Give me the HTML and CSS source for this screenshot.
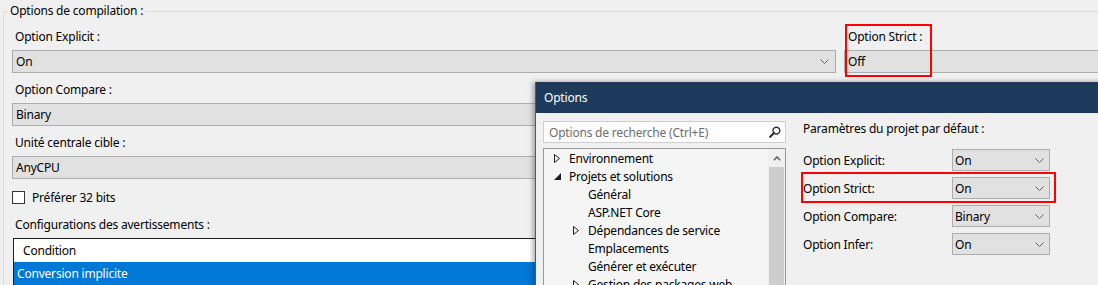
FILE: index.html
```html
<!DOCTYPE html>
<html lang="fr">
<head>
<meta charset="utf-8">
<title>Options de compilation</title>
<link rel="stylesheet" href="styles.css">
</head>
<body>
<div class="page">
  <section class="group">
    <div class="group-head">
      <span class="group-corner"></span>
      <span class="group-title">Options de compilation :</span>
      <span class="group-rule"></span>
    </div>
    <div class="group-body">
      <div class="pair">
        <div class="field field-main">
          <div class="label">Option Explicit :</div>
          <div class="combo"><span>On</span><svg class="chev" width="9" height="5" viewBox="0 0 9 5"><polyline points="0.5,0.5 4.5,4.5 8.5,0.5"/></svg></div>
        </div>
        <div class="field field-side">
          <div class="label label-side">Option Strict :</div>
          <div class="combo"><span>Off</span></div>
        </div>
      </div>
      <div class="field field-main">
        <div class="label">Option Compare :</div>
        <div class="combo"><span>Binary</span></div>
      </div>
      <div class="field field-main">
        <div class="label">Unité centrale cible :</div>
        <div class="combo"><span>AnyCPU</span></div>
      </div>
      <div class="check"><span class="box"></span><span>Préférer 32 bits</span></div>
      <div class="field field-main field-list">
        <div class="label">Configurations des avertissements :</div>
        <div class="list">
          <div class="list-row">Condition</div>
          <div class="list-row selected">Conversion implicite</div>
        </div>
      </div>
    </div>
  </section>
  <div class="mark mark-top"></div>

  <div class="dialog">
    <div class="dialog-title">Options</div>
    <div class="dialog-body">
      <div class="nav">
        <div class="search">
          <span class="placeholder">Options de recherche (Ctrl+E)</span>
          <svg class="magnifier" width="12" height="12" viewBox="0 0 12 12"><circle cx="7.4" cy="4.6" r="3.4"/><line x1="5" y1="7" x2="1.2" y2="10.8"/></svg>
        </div>
        <div class="tree">
          <div class="tree-items">
            <div class="tree-row lvl0"><span class="exp"><svg width="6" height="9" viewBox="0 0 6 9"><polygon class="tri-open" points="0.5,0.5 5.5,4.5 0.5,8.5"/></svg></span>Environnement</div>
            <div class="tree-row lvl0"><span class="exp"><svg width="7" height="7" viewBox="0 0 7 7"><polygon class="tri-full" points="7,0 7,7 0,7"/></svg></span>Projets et solutions</div>
            <div class="tree-row lvl1"><span class="exp"></span>Général</div>
            <div class="tree-row lvl1"><span class="exp"></span>ASP.NET Core</div>
            <div class="tree-row lvl1"><span class="exp"><svg width="6" height="9" viewBox="0 0 6 9"><polygon class="tri-open" points="0.5,0.5 5.5,4.5 0.5,8.5"/></svg></span>Dépendances de service</div>
            <div class="tree-row lvl1"><span class="exp"></span>Emplacements</div>
            <div class="tree-row lvl1"><span class="exp"></span>Générer et exécuter</div>
            <div class="tree-row lvl1"><span class="exp"><svg width="6" height="9" viewBox="0 0 6 9"><polygon class="tri-open" points="0.5,0.5 5.5,4.5 0.5,8.5"/></svg></span>Gestion des packages web</div>
          </div>
          <div class="scrollbar">
            <div class="sb-up"><svg width="8" height="5" viewBox="0 0 8 5"><polyline points="0.8,4.2 4,1 7.2,4.2"/></svg></div>
            <div class="sb-thumb"></div>
          </div>
        </div>
      </div>
      <div class="params">
        <div class="params-title">Paramètres du projet par défaut :</div>
        <div class="params-rows">
          <div class="param"><span class="param-label">Option Explicit:</span><div class="combo combo-sm"><span>On</span><svg class="chev" width="9" height="5" viewBox="0 0 9 5"><polyline points="0.5,0.5 4.5,4.5 8.5,0.5"/></svg></div></div>
          <div class="param"><span class="param-label">Option Strict:</span><div class="combo combo-sm"><span>On</span><svg class="chev" width="9" height="5" viewBox="0 0 9 5"><polyline points="0.5,0.5 4.5,4.5 8.5,0.5"/></svg></div></div>
          <div class="param"><span class="param-label">Option Compare:</span><div class="combo combo-sm"><span>Binary</span><svg class="chev" width="9" height="5" viewBox="0 0 9 5"><polyline points="0.5,0.5 4.5,4.5 8.5,0.5"/></svg></div></div>
          <div class="param"><span class="param-label">Option Infer:</span><div class="combo combo-sm"><span>On</span><svg class="chev" width="9" height="5" viewBox="0 0 9 5"><polyline points="0.5,0.5 4.5,4.5 8.5,0.5"/></svg></div></div>
        </div>
      </div>
    </div>
    <div class="mark mark-dialog"></div>
  </div>
</div>
</body>
</html>
```

FILE: styles.css
```css
html, body {
  margin: 0;
  padding: 0;
  overflow: hidden;
}
body {
  background: #f0f0f0;
  font-family: "Noto Sans", "Open Sans", sans-serif;
  font-size: 12px;
  letter-spacing: -0.2px;
  color: #000;
}
.page {
  position: relative;
  width: 1098px;
  height: 285px;
  overflow: hidden;
  padding-top: 2px;
  box-sizing: border-box;
}

/* group box */
.group { margin-left: 3px; }
.group-head { display: flex; height: 18px; }
.group-corner {
  width: 4px;
  margin-top: 9px;
  border-top: 1px solid #dcdcdc;
  border-left: 1px solid #dcdcdc;
}
.group-title { padding: 0 2px; line-height: 18px; white-space: nowrap; }
.group-rule { flex: 1; margin-top: 9px; border-top: 1px solid #dcdcdc; }
.group-body { border-left: 1px solid #dcdcdc; padding-left: 8px; }

.pair { display: flex; gap: 8px; width: 1200px; }
.field { display: flex; flex-direction: column; gap: 4px; padding-top: 8px; }
.field-main { width: 824px; flex: none; }
.field-side { width: 300px; flex: none; }
.label { height: 18px; line-height: 18px; padding-left: 3px; white-space: nowrap; }
.label-side { padding-left: 4px; }

.combo {
  height: 23px;
  box-sizing: border-box;
  border: 1px solid #adadad;
  background: #e1e1e1;
  display: flex;
  align-items: center;
  justify-content: space-between;
  padding: 0 6px 0 3px;
  white-space: nowrap;
}
.chev polyline { fill: none; stroke: #606060; stroke-width: 1; }

.check {
  display: flex;
  align-items: center;
  gap: 7px;
  height: 18px;
  margin-top: 9px;
}
.box {
  width: 13px;
  height: 13px;
  box-sizing: border-box;
  border: 1px solid #333;
  background: #fff;
}
.field-list { padding-top: 10px; }
.list {
  margin-left: 1px;
  border: 1px solid #1e1e1e;
  background: #fff;
}
.list-row { height: 23px; line-height: 23px; padding-left: 9px; }
.list-row.selected { background: #0078d7; color: #fff; padding-left: 3px; }

/* annotation boxes */
.mark {
  position: absolute;
  box-sizing: border-box;
  border: 2px solid #f00;
}
.mark-top { left: 845px; top: 24px; width: 87px; height: 53px; }
.mark-dialog { left: 265px; top: 90px; width: 255px; height: 31px; }

/* dialog */
.dialog {
  position: absolute;
  left: 535px;
  top: 82px;
  width: 620px;
  height: 260px;
  background: #f0f0f0;
  border-left: 1px solid #505a66;
  box-shadow: -2px 0 5px rgba(0, 0, 0, 0.35);
}
.dialog-title {
  height: 31px;
  line-height: 31px;
  background: #1e3a5c;
  color: #fff;
  padding-left: 8px;
}
.dialog-body { display: flex; padding: 8px 0 0 7px; }
.nav { width: 243px; flex: none; display: flex; flex-direction: column; gap: 5px; }
.search {
  height: 22px;
  box-sizing: border-box;
  border: 1px solid #cfcfcf;
  background: #fff;
  display: flex;
  align-items: center;
  justify-content: space-between;
  padding: 0 4px 0 5px;
}
.placeholder { color: #6d6d6d; white-space: nowrap; }
.magnifier circle { fill: none; stroke: #333; stroke-width: 1.5; }
.magnifier line { stroke: #333; stroke-width: 2.2; stroke-linecap: round; }

.tree {
  height: 200px;
  box-sizing: border-box;
  border: 1px solid #999;
  background: #f5f5f5;
  display: flex;
}
.tree-items { flex: 1; }
.tree-row {
  height: 18px;
  display: flex;
  align-items: center;
  white-space: nowrap;
}
.lvl0 { padding-left: 5px; }
.lvl1 { padding-left: 24px; }
.exp {
  width: 16px;
  margin-right: 4px;
  display: flex;
  align-items: center;
  justify-content: center;
}
.tri-open { fill: none; stroke: #1e1e1e; stroke-width: 1; }
.tri-full { fill: #1e1e1e; }
.scrollbar {
  width: 17px;
  display: flex;
  flex-direction: column;
  background: #f0f0f0;
}
.sb-up { height: 18px; display: flex; align-items: center; justify-content: center; }
.sb-up polyline { fill: none; stroke: #606060; stroke-width: 1.6; }
.sb-thumb { flex: 1; margin: 0 1px; background: #cdcdcd; }

.params { margin-left: 17px; }
.params-title { height: 18px; line-height: 18px; margin-top: -1px; white-space: nowrap; }
.params-rows { margin-top: 11px; display: flex; flex-direction: column; gap: 6px; }
.param { display: flex; align-items: center; height: 22px; }
.param-label { width: 149px; white-space: nowrap; }
.combo-sm { width: 98px; height: 22px; padding: 0 5px 0 2px; }
```
